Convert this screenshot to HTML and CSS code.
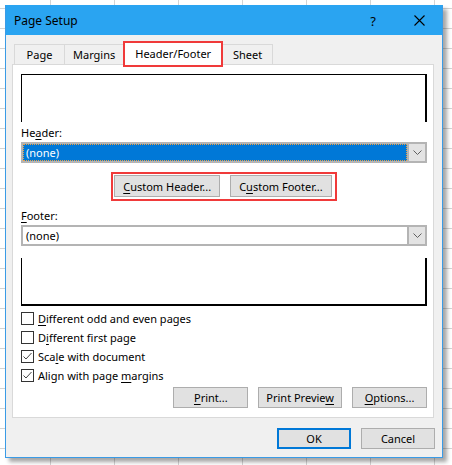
FILE: index.html
```html
<!DOCTYPE html>
<html>
<head>
  <meta charset="utf-8">
  <title>Page Setup</title>
  <link rel="stylesheet" href="styles.css">
</head>
<body>
  <div class="dialog">
    <div class="titlebar">
      <span class="title">Page Setup</span>
      <span class="title-btn help">?</span>
      <span class="title-btn">
        <svg width="11" height="11" viewBox="0 0 11 11"><path d="M0.5 0.5 L10.5 10.5 M10.5 0.5 L0.5 10.5" stroke="#000" stroke-width="1.1" fill="none"/></svg>
      </span>
    </div>

    <div class="dialog-body">
      <div class="tabs">
        <div class="tab">Page</div>
        <div class="tab">Margins</div>
        <div class="tab active">Header/Footer</div>
        <div class="tab">Sheet</div>
      </div>

      <div class="panel">
        <div class="preview preview-top"></div>

        <div class="field-label">He<u>a</u>der:</div>
        <div class="combo focused">
          <div class="combo-value"><span>(none)</span></div>
          <div class="combo-arrow">
            <svg width="9" height="5" viewBox="0 0 9 5"><path d="M0.5 0.5 L4.5 4.5 L8.5 0.5" stroke="#606060" stroke-width="1" fill="none"/></svg>
          </div>
        </div>

        <div class="custom-buttons">
          <button class="btn"><u>C</u>ustom Header...</button>
          <button class="btn">C<u>u</u>stom Footer...</button>
        </div>

        <div class="field-label footer-label"><u>F</u>ooter:</div>
        <div class="combo">
          <div class="combo-value"><span>(none)</span></div>
          <div class="combo-arrow">
            <svg width="9" height="5" viewBox="0 0 9 5"><path d="M0.5 0.5 L4.5 4.5 L8.5 0.5" stroke="#606060" stroke-width="1" fill="none"/></svg>
          </div>
        </div>

        <div class="preview preview-bottom"></div>

        <div class="checks">
          <div class="check-row"><span class="checkbox"></span><span><u>D</u>ifferent odd and even pages</span></div>
          <div class="check-row"><span class="checkbox"></span><span>D<u>i</u>fferent first page</span></div>
          <div class="check-row">
            <span class="checkbox"><svg width="11" height="11" viewBox="0 0 11 11"><path d="M1.5 5.5 L4 8 L9.5 2" stroke="#444" stroke-width="1" fill="none"/></svg></span>
            <span>Sca<u>l</u>e with document</span>
          </div>
          <div class="check-row">
            <span class="checkbox"><svg width="11" height="11" viewBox="0 0 11 11"><path d="M1.5 5.5 L4 8 L9.5 2" stroke="#444" stroke-width="1" fill="none"/></svg></span>
            <span>Align with page <u>m</u>argins</span>
          </div>
        </div>

        <div class="panel-buttons">
          <button class="btn"><u>P</u>rint...</button>
          <button class="btn">Print Previe<u>w</u></button>
          <button class="btn"><u>O</u>ptions...</button>
        </div>
      </div>

      <div class="dialog-buttons">
        <button class="btn btn-default">OK</button>
        <button class="btn">Cancel</button>
      </div>
    </div>
  </div>
</body>
</html>
```

FILE: styles.css
```css
* {
  margin: 0;
  padding: 0;
  box-sizing: border-box;
}

body {
  width: 452px;
  height: 465px;
  overflow: hidden;
  font-family: "Noto Sans", "Open Sans", sans-serif;
  font-size: 11px;
  color: #000;
  background-color: #fff;
  background-image:
    linear-gradient(to right, #d4d4d4 1px, transparent 1px),
    linear-gradient(to bottom, #d4d4d4 1px, transparent 1px);
  background-size: 64px 100%, 100% 20px;
  background-position: 50px 0, 0 8px;
}

u {
  text-decoration: underline;
  text-underline-offset: 2px;
}

.dialog {
  margin: 5px 0 0 5px;
  width: 438px;
  height: 453px;
  background: #f0f0f0;
  border: 1px solid #3a9be6;
  border-top-color: #2aa4f1;
  box-shadow: 4px 4px 4px rgba(0, 0, 0, 0.35);
}

.titlebar {
  height: 29px;
  background: #2aa4f1;
  display: flex;
  align-items: center;
}

.title {
  flex: 1;
  padding-left: 8px;
  font-size: 12px;
}

.title-btn {
  width: 46px;
  height: 29px;
  display: flex;
  align-items: center;
  justify-content: center;
}

.help {
  font-size: 13px;
}

.dialog-body {
  padding: 9px 8px 0 6px;
}

.tabs {
  display: flex;
  align-items: flex-start;
  height: 20px;
  padding-left: 2px;
}

.tab {
  height: 20px;
  min-width: 51px;
  padding: 0 8px;
  margin-right: -1px;
  border: 1px solid #d9d9d9;
  border-bottom: none;
  background: #f0f0f0;
  display: flex;
  align-items: center;
  justify-content: center;
}

.tab.active {
  position: relative;
  z-index: 1;
  height: 26px;
  margin-top: -3px;
  padding: 0 10px 2px;
  background: #fff;
  border: 2px solid #f03a3a;
}

.panel {
  background: #fff;
  border: 1px solid #d9d9d9;
  padding: 9px 6px 9px 8px;
}

.preview {
  height: 48px;
  border-left: 1px solid #000;
  border-right: 2px solid #000;
}

.preview-top {
  border-top: 1px solid #000;
}

.preview-bottom {
  margin-top: 12px;
  border-bottom: 2px solid #000;
}

.field-label {
  margin-top: 3px;
  height: 16px;
  line-height: 16px;
}

.footer-label {
  margin-top: 7px;
}

.combo {
  margin-top: 1px;
  height: 21px;
  display: flex;
  border: 2px solid #b4b4b4;
  background: #fff;
}

.combo-value {
  flex: 1;
  display: flex;
  align-items: center;
  padding-left: 3px;
}

.combo.focused .combo-value {
  background: #0078d7;
  color: #fff;
  outline: 1px dotted #f0a040;
  outline-offset: -1px;
}

.combo-arrow {
  width: 18px;
  border-left: 2px solid #b4b4b4;
  background: #e3e3e3;
  display: flex;
  align-items: center;
  justify-content: center;
}

.btn {
  height: 22px;
  min-width: 75px;
  padding: 0 7px;
  font-family: inherit;
  font-size: 11px;
  color: #000;
  background: #e1e1e1;
  border: 1px solid #adadad;
}

.custom-buttons {
  margin: 9px auto 0;
  width: fit-content;
  display: flex;
  gap: 10px;
  padding: 1px 3px 2px 1px;
  border: 2px solid #f03a3a;
}

.custom-buttons .btn {
  padding: 0 8px;
}

.checks {
  margin-top: 3px;
}

.check-row {
  height: 19px;
  display: flex;
  align-items: center;
}

.checkbox {
  width: 13px;
  height: 13px;
  margin-right: 4px;
  border: 1px solid #333;
  background: #fff;
  display: flex;
  align-items: center;
  justify-content: center;
}

.panel-buttons {
  margin-top: 2px;
  display: flex;
  justify-content: flex-end;
  gap: 10px;
}

.panel-buttons .btn {
  height: 21px;
}

.dialog-buttons {
  margin-top: 10px;
  margin-right: -1px;
  display: flex;
  justify-content: flex-end;
  gap: 10px;
}

.dialog-buttons .btn {
  height: 21px;
  min-width: 74px;
}

.btn-default {
  border: 2px solid #0078d7;
}
```
